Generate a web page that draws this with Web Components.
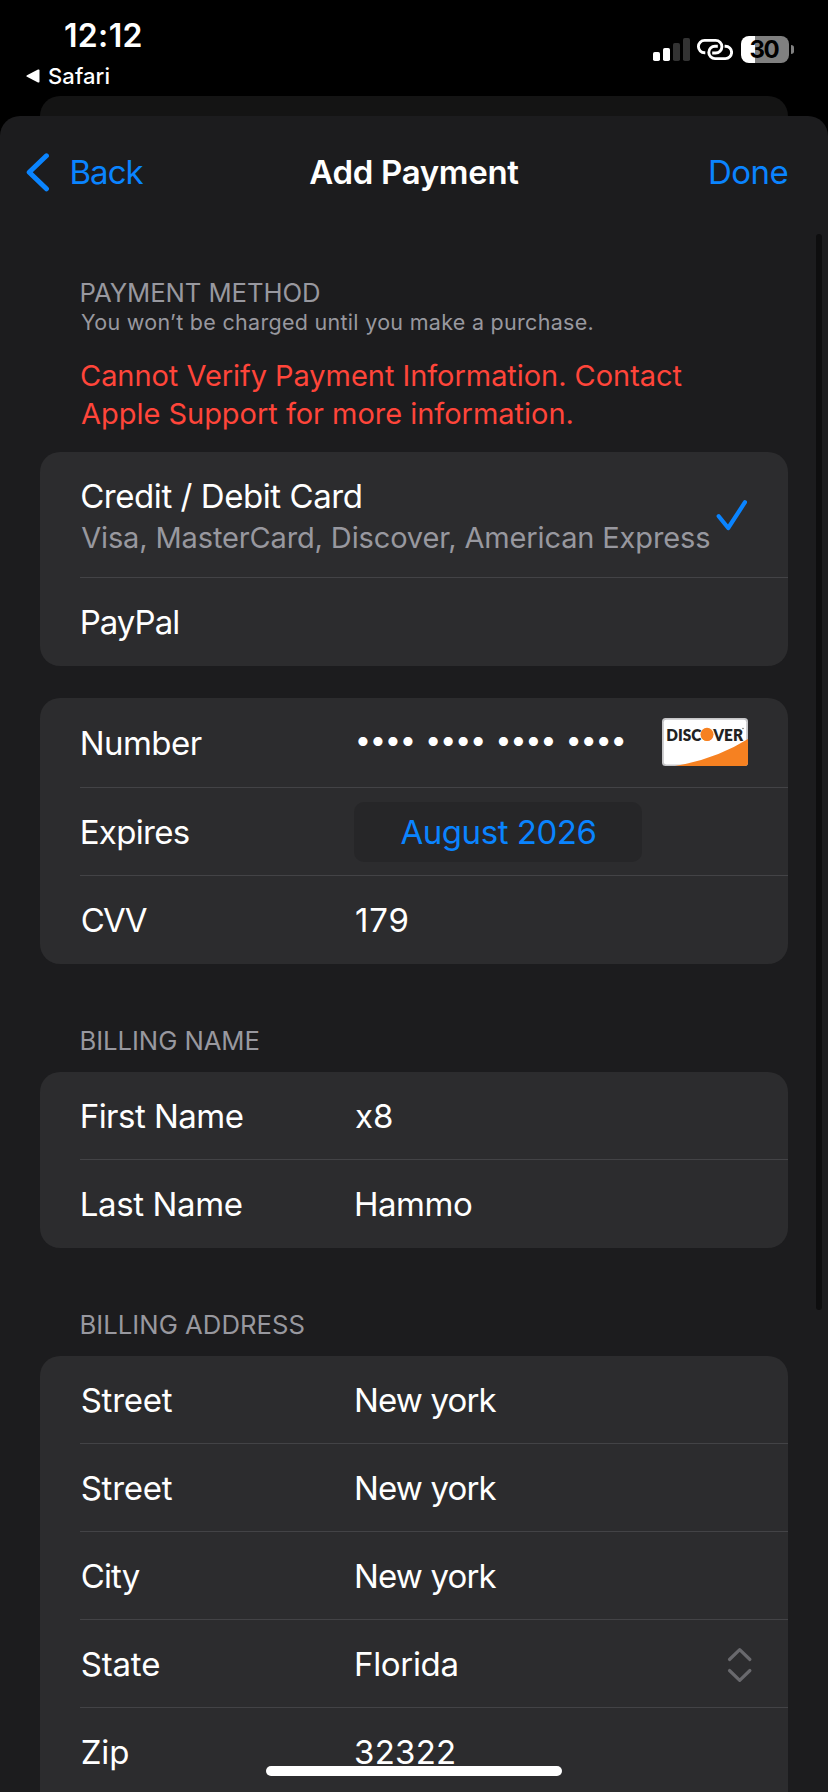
<!DOCTYPE html>
<html lang="en">
<head>
<meta charset="utf-8">
<title>Add Payment</title>
<style>
  html, body { margin: 0; height: 1792px; overflow: hidden; background: #000; }
  body { font-family: Inter, "Liberation Sans", sans-serif; color: #fff; }
</style>
</head>
<body>
<payment-screen></payment-screen>
<script>
const define = (name, html, ready) => {
  const tpl = document.createElement('template');
  tpl.innerHTML = html;
  customElements.define(name, class extends HTMLElement {
    connectedCallback() {
      if (this.shadowRoot) return;
      this.attachShadow({ mode: 'open' }).append(tpl.content.cloneNode(true));
      if (ready) ready(this, this.shadowRoot);
    }
  });
};

/* Single line of text tracked so that its ink spans `w` pixels. */
const ctx = document.createElement('canvas').getContext('2d');
define('ui-text', `<style>:host { display: block; white-space: nowrap; }</style><slot></slot>`, (el) => {
  const size = el.getAttribute('size') || 33;
  const weight = el.getAttribute('weight') || 400;
  el.style.fontSize = size + 'px';
  el.style.fontWeight = weight;
  const text = el.textContent;
  ctx.font = `${weight} ${size}px Inter, "Liberation Sans", sans-serif`;
  const m = ctx.measureText(text);
  const ink = m.actualBoundingBoxRight + m.actualBoundingBoxLeft;
  const w = +el.getAttribute('w');
  const gap = w ? (w - ink) / (text.length - 1) : 0;
  el.style.letterSpacing = gap.toFixed(3) + 'px';
  /* trim side bearings so the box is as wide as the ink */
  el.style.marginLeft = m.actualBoundingBoxLeft.toFixed(2) + 'px';
  el.style.marginRight = (m.actualBoundingBoxRight - m.width - gap).toFixed(2) + 'px';
});

define('status-bar', `
  <style>
    :host { display: flex; justify-content: space-between; height: 96px; box-sizing: border-box; }
    .left { padding: 16px 0 0 26px; }
    .time { padding-left: 39px; line-height: 39px; }
    .app { display: flex; align-items: center; gap: 9px; height: 42px; line-height: 42px; }
    .right { display: flex; align-items: flex-start; padding: 36px 39px 0 0; }
    .battery { flex: none; position: relative; width: 48px; height: 27px; margin-left: 8px; border-radius: 8px;
      background: linear-gradient(90deg, #fff 14px, #808080 14px); color: #000;
      line-height: 27px; display: flex; justify-content: center; }
    .battery::after { content: ""; position: absolute; left: 50px; top: 9px; width: 3px; height: 9px;
      border-radius: 0 5px 5px 0 / 0 4.5px 4.5px 0; background: #808080; }
    svg { display: block; flex: none; }
  </style>
  <div class="left">
    <div class="time"><ui-text size="32" weight="600" w="76.5">12:12</ui-text></div>
    <div class="app">
      <svg width="14" height="16" viewBox="0 0 14 16"><path d="M1 7.2 12 1.6Q13.5 1 13.5 2.4V13.6Q13.5 15 12 14.4L1 8.8Q-.4 8 1 7.2Z" fill="#fff"/></svg>
      <ui-text size="22" weight="450" w="60.5">Safari</ui-text>
    </div>
  </div>
  <div class="right">
    <svg width="80" height="27" viewBox="653 36 80 27">
      <rect x="653" y="52" width="7" height="9" rx="1.8" fill="#fff"/>
      <rect x="663" y="48" width="7" height="13" rx="1.8" fill="#fff"/>
      <rect x="673" y="43" width="7" height="18" rx="1.8" fill="#333"/>
      <rect x="683" y="38" width="7" height="23" rx="1.8" fill="#333"/>
      <g fill="none" stroke="#fff" stroke-width="2.9">
        <path d="M705.3 52.8H704.6A6.2 6.2 0 0 1 704.6 40.4H715.6A6.3 6.3 0 0 1 715.6 53H712.2"/>
        <path d="M724.6 46.2H725.4A6.2 6.2 0 0 1 725.4 58.6H715A6.2 6.2 0 0 1 715 46.2H717.8"/>
      </g>
    </svg>
    <div class="battery"><ui-text size="24" weight="700" w="29">30</ui-text></div>
  </div>`);

define('nav-bar', `
  <style>
    :host { display: grid; grid-template-columns: 1fr auto 1fr; align-items: center; height: 112px; padding: 0 40.5px 0 26px; line-height: 40px; }
    .back { display: flex; align-items: center; gap: 22.5px; color: #0a84ff; }
    .done { display: flex; justify-content: flex-end; color: #0a84ff; }
    svg { display: block; }
    .title { margin-left: 15px; }
  </style>
  <div class="back">
    <svg width="23" height="40" viewBox="26 152 23 40"><path d="M46.4 155.8 29.2 172.3 46.4 188.8" fill="none" stroke="#0a84ff" stroke-width="5" stroke-linecap="round" stroke-linejoin="round"/></svg>
    <ui-text w="72">Back</ui-text>
  </div>
  <div class="title"><ui-text weight="600" w="210">Add Payment</ui-text></div>
  <div class="done"><ui-text w="77.5">Done</ui-text></div>`);

define('section-heading', `
  <style>:host { display: block; height: 30px; line-height: 30px; padding-left: 41.5px; color: #98989f; }</style>
  <slot></slot>`);

define('form-card', `
  <style>:host { display: block; background: #2c2c2e; border-radius: 20px; overflow: hidden; }</style>
  <slot></slot>`);

define('form-row', `
  <style>
    :host { display: grid; grid-template-columns: 276px 1fr auto; align-items: center; box-sizing: border-box;
      height: var(--row-height, 88px); margin-left: 40px; line-height: 40px; border-bottom: 1px solid #434346; }
    :host([last]) { border-bottom: 0; }
    .label { padding-left: 1.7px; }
  </style>
  <div class="label"><slot name="label"></slot></div>
  <div><slot></slot></div>
  <div><slot name="accessory"></slot></div>`);

define('choice-row', `
  <style>
    :host { display: flex; align-items: center; justify-content: space-between; box-sizing: border-box;
      height: 126px; margin-left: 40px; padding: 4px 42px 0 1.2px; border-bottom: 1px solid #434346; }
    .copy { line-height: 42px; }
    .sub { color: #98989f; }
    svg { display: block; flex: none; margin: -4px -1px 0 0; }
  </style>
  <div class="copy">
    <slot></slot>
    <div class="sub"><slot name="sub"></slot></div>
  </div>
  <svg width="31" height="32" viewBox="715 499 31 32"><path d="M717.7 516.2 727.2 528 744 502.2" fill="none" stroke="#0a84ff" stroke-width="4.2" stroke-linecap="round" stroke-linejoin="round"/></svg>`);

define('date-pill', `
  <style>:host { display: flex; justify-content: center; width: 288px; height: 60px; margin-left: -2px; line-height: 60px; border-radius: 10px; background: #262628; color: #0a84ff; }</style>
  <slot></slot>`);

define('masked-number', `
  <style>
    :host { display: flex; gap: 15.3px; padding: 0 0 6px 1.7px; color: #fff; }
  </style>
  <ui-text w="55" size="29">••••</ui-text><ui-text w="55" size="29">••••</ui-text><ui-text w="55" size="29">••••</ui-text><ui-text w="55" size="29">••••</ui-text>`);

define('discover-logo', `
  <style>:host { display: block; margin-right: 40px; padding-bottom: 1px; } svg { display: block; overflow: visible; }</style>
  <svg width="86" height="48" viewBox="0 0 86 48">
    <rect width="86" height="48" rx="3.5" fill="#c6c6c8"/>
    <rect x="1.8" y="1.8" width="82.4" height="44.6" rx="2.4" fill="#fff"/>
    <path d="M13 48Q54 41 86 21V44.5A3.5 3.5 0 0 1 82.5 48Z" fill="#f68121"/>
    <text x="4.2" y="22.6" font-family="Lato, sans-serif" font-weight="800" font-size="17.5" fill="#222" textLength="76.8" lengthAdjust="spacingAndGlyphs">DISC<tspan fill="#f68121">O</tspan>VER</text>
    <circle cx="45" cy="16.3" r="6.5" fill="#f68121"/>
    <circle cx="81" cy="10.5" r=".7" fill="#555"/>
  </svg>`);

define('up-down-chevrons', `
  <style>:host { display: block; margin-right: 34px; } svg { display: block; }</style>
  <svg width="28" height="38" viewBox="726 1645 28 38"><path d="M729.5 1659.5 739.7 1649.7 749.9 1659.5M729.5 1670.5 739.7 1680.3 749.9 1670.5" fill="none" stroke="#69696d" stroke-width="3.2" stroke-linecap="round" stroke-linejoin="round"/></svg>`);

define('payment-form', `
  <style>
    :host { display: block; padding: 50px 40px 0; }
    .intro { padding-left: 41px; }
    .note { height: 29px; line-height: 29px; color: #98989f; }
    .error { padding-top: 20px; line-height: 38px; color: #ff453a; }
    .methods { margin-top: 19px; }
    .card { margin-top: 32px; }
    .name, .address { margin-top: 62px; }
    .name + form-card, .address + form-card { margin-top: 16px; }
    .open { padding-bottom: 60px; }
    .tall { --row-height: 90px; }
  </style>
  <section-heading><ui-text size="25.7" w="237.5">PAYMENT METHOD</ui-text></section-heading>
  <div class="intro">
    <div class="note"><ui-text size="21.5" w="511.5">You won’t be charged until you make a purchase.</ui-text></div>
    <div class="error">
      <ui-text size="29" w="600.5">Cannot Verify Payment Information. Contact</ui-text>
      <ui-text size="29" w="491.5">Apple Support for more information.</ui-text>
    </div>
  </div>
  <form-card class="methods">
    <choice-row><ui-text w="279.5">Credit / Debit Card</ui-text><ui-text slot="sub" size="29" w="628">Visa, MasterCard, Discover, American Express</ui-text></choice-row>
    <form-row last><ui-text slot="label" w="96.5">PayPal</ui-text></form-row>
  </form-card>
  <form-card class="card">
    <form-row class="tall"><ui-text slot="label" w="120">Number</ui-text><masked-number></masked-number><discover-logo slot="accessory"></discover-logo></form-row>
    <form-row><ui-text slot="label" w="107">Expires</ui-text><date-pill><ui-text w="195">August 2026</ui-text></date-pill></form-row>
    <form-row last><ui-text slot="label" w="65">CVV</ui-text><ui-text w="51.5">179</ui-text></form-row>
  </form-card>
  <section-heading class="name"><ui-text size="25.7" w="177">BILLING NAME</ui-text></section-heading>
  <form-card>
    <form-row><ui-text slot="label" w="161">First Name</ui-text><ui-text w="36">x8</ui-text></form-row>
    <form-row last><ui-text slot="label" w="160">Last Name</ui-text><ui-text w="116">Hammo</ui-text></form-row>
  </form-card>
  <section-heading class="address"><ui-text size="25.7" w="223">BILLING ADDRESS</ui-text></section-heading>
  <form-card class="open">
    <form-row><ui-text slot="label" w="91">Street</ui-text><ui-text w="140.5">New york</ui-text></form-row>
    <form-row><ui-text slot="label" w="91">Street</ui-text><ui-text w="140.5">New york</ui-text></form-row>
    <form-row><ui-text slot="label" w="58">City</ui-text><ui-text w="140.5">New york</ui-text></form-row>
    <form-row><ui-text slot="label" w="77.5">State</ui-text><ui-text w="100.5">Florida</ui-text><up-down-chevrons slot="accessory"></up-down-chevrons></form-row>
    <form-row><ui-text slot="label" w="46.5">Zip</ui-text><ui-text w="98">32322</ui-text></form-row>
  </form-card>`);

define('payment-screen', `
  <style>
    :host { display: flex; flex-direction: column; position: relative; width: 828px; height: 1792px; overflow: hidden; background: #000; }
    status-bar { flex: none; }
    .behind { flex: none; height: 40px; margin: 0 40px -20px; border-radius: 20px 20px 0 0; background: #141414; }
    .sheet { position: relative; flex: 1; min-height: 0; overflow: hidden; border-radius: 20px 20px 0 0; background: #1c1c1e; }
    .scroll { position: absolute; left: 816px; top: 118px; width: 6px; height: 1076px; border-radius: 3px; background: #0e0e0f; }
    .home { position: absolute; left: 266px; top: 1766px; width: 296px; height: 10px; border-radius: 5px; background: #fff; }
  </style>
  <status-bar></status-bar>
  <div class="behind"></div>
  <div class="sheet">
    <nav-bar></nav-bar>
    <payment-form></payment-form>
    <div class="scroll"></div>
  </div>
  <div class="home"></div>`);
</script>
</body>
</html>
